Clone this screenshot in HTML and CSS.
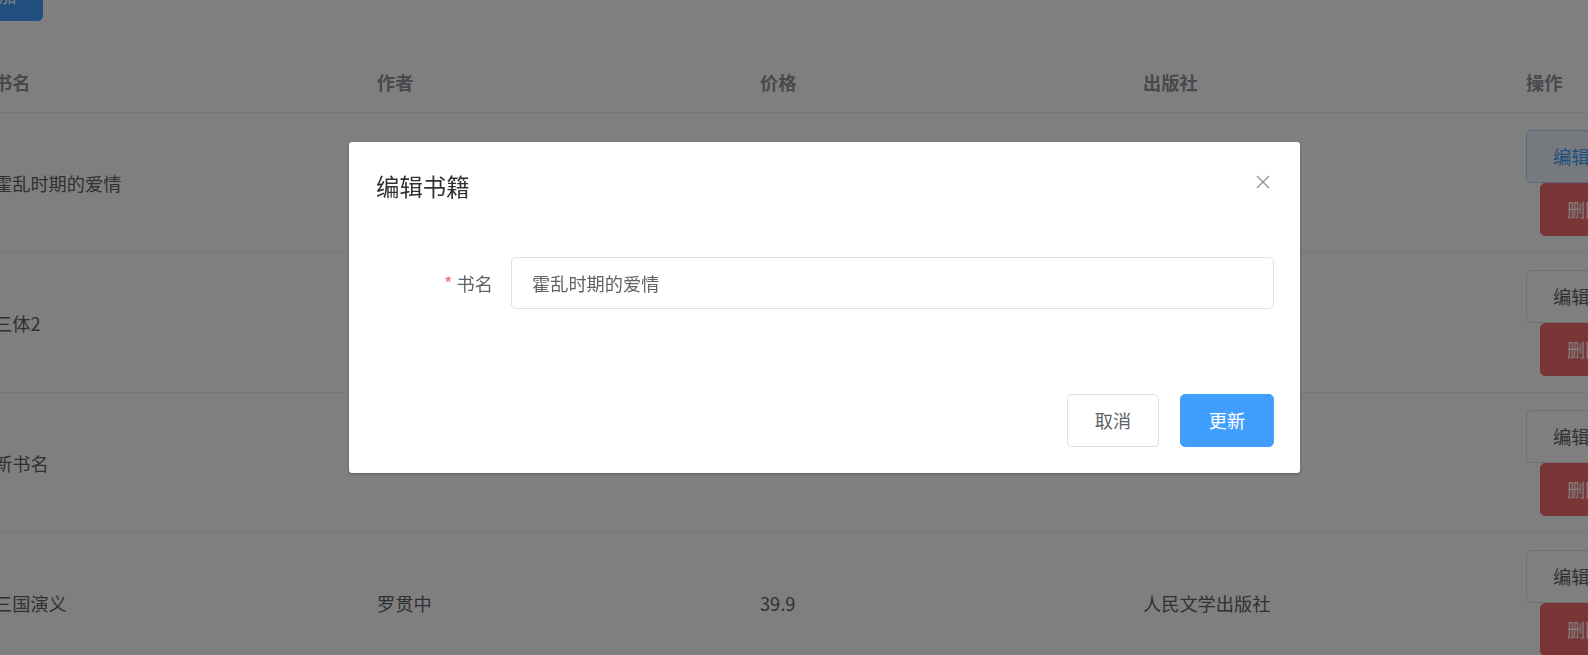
FILE: index.html
```html
<!DOCTYPE html>
<html lang="zh-CN">
<head>
<meta charset="utf-8">
<title>图书管理</title>
<link rel="stylesheet" href="styles.css">
</head>
<body>
<div class="page">
  <div class="toolbar">
    <button class="btn btn-primary">添加</button>
  </div>
  <div class="table">
    <div class="row head">
      <div class="cell">书名</div>
      <div class="cell">作者</div>
      <div class="cell">价格</div>
      <div class="cell">出版社</div>
      <div class="cell">操作</div>
    </div>
    <div class="row">
      <div class="cell">霍乱时期的爱情</div>
      <div class="cell">加西亚·马尔克斯</div>
      <div class="cell">39.5</div>
      <div class="cell">南海出版公司</div>
      <div class="cell actions">
        <button class="btn btn-plain-active">编辑</button>
        <button class="btn btn-danger">删除</button>
      </div>
    </div>
    <div class="row">
      <div class="cell">三体2</div>
      <div class="cell">刘慈欣</div>
      <div class="cell">32</div>
      <div class="cell">重庆出版社</div>
      <div class="cell actions">
        <button class="btn">编辑</button>
        <button class="btn btn-danger">删除</button>
      </div>
    </div>
    <div class="row">
      <div class="cell">新书名</div>
      <div class="cell">新作者</div>
      <div class="cell">20</div>
      <div class="cell">新出版社</div>
      <div class="cell actions">
        <button class="btn">编辑</button>
        <button class="btn btn-danger">删除</button>
      </div>
    </div>
    <div class="row">
      <div class="cell">三国演义</div>
      <div class="cell">罗贯中</div>
      <div class="cell">39.9</div>
      <div class="cell">人民文学出版社</div>
      <div class="cell actions">
        <button class="btn">编辑</button>
        <button class="btn btn-danger">删除</button>
      </div>
    </div>
  </div>
</div>

<div class="overlay"></div>

<div class="dialog-wrap">
  <div class="dialog">
    <div class="dialog-header">
      <span class="dialog-title">编辑书籍</span>
      <button class="dialog-close" aria-label="关闭">
        <svg width="14" height="14" viewBox="0 0 14 14"><path d="M1 1 L13 13 M13 1 L1 13" stroke="#909399" stroke-width="1.4" fill="none"/></svg>
      </button>
    </div>
    <div class="dialog-body">
      <div class="form-item">
        <label class="form-label"><span class="req">*</span>书名</label>
        <input class="input" type="text" value="霍乱时期的爱情">
      </div>
    </div>
    <div class="dialog-footer">
      <button class="btn btn-cancel">取消</button>
      <button class="btn btn-primary btn-update">更新</button>
    </div>
  </div>
</div>
</body>
</html>
```
FILE: styles.css
```css
html, body {
  margin: 0;
  padding: 0;
  height: 100%;
  overflow: hidden;
  background: #ffffff;
  font-family: "Noto Sans CJK SC", "Noto Sans", "Liberation Sans", sans-serif;
  color: #606266;
}

.page {
  margin: -31px 0 0 -47px;
}

.toolbar {
  display: flex;
  height: 52px;
}

.btn {
  box-sizing: border-box;
  height: 53px;
  padding: 0 26px;
  border: 1px solid #dcdfe6;
  border-radius: 5px;
  background: #ffffff;
  color: #606266;
  font-family: inherit;
  font-size: 18.2px;
  line-height: 1;
  white-space: nowrap;
  cursor: pointer;
}

.toolbar .btn {
  height: 52px;
}

.btn-primary {
  background: #409eff;
  border-color: #409eff;
  color: #ffffff;
}

.btn-danger {
  background: #f56c6c;
  border-color: #f56c6c;
  color: #ffffff;
}

.btn-plain-active {
  background: #ecf5ff;
  border-color: #b3d8ff;
  color: #409eff;
}

.table {
  margin: 30px 0 0 28px;
  width: 1915px;
}

.row {
  display: grid;
  grid-template-columns: repeat(5, 383px);
  height: 140px;
  box-sizing: border-box;
  border-bottom: 1px solid #ebeef5;
}

.row.head {
  height: 62px;
}

.cell {
  box-sizing: border-box;
  padding: 0 13px;
  display: flex;
  align-items: center;
  font-size: 18.2px;
  line-height: 30px;
  color: #606266;
}

.head .cell {
  color: #909399;
  font-weight: bold;
}

.actions {
  flex-direction: column;
  align-items: flex-start;
  justify-content: center;
}

.actions .btn-danger {
  margin-left: 14px;
}

.overlay {
  position: fixed;
  inset: 0;
  background: rgba(0, 0, 0, 0.5);
}

.dialog-wrap {
  position: fixed;
  left: 349px;
  top: 142px;
}

.dialog {
  width: 951px;
  background: #ffffff;
  border-radius: 3px;
  box-shadow: 0 1px 3px rgba(0, 0, 0, 0.3);
}

.dialog-header {
  position: relative;
  padding: 29px 26px 10px 27px;
  height: 31px;
}

.dialog-title {
  font-size: 23.4px;
  line-height: 31px;
  color: #303133;
}

.dialog-close {
  position: absolute;
  top: 33px;
  right: 30px;
  width: 14px;
  height: 14px;
  padding: 0;
  border: 0;
  background: transparent;
  display: flex;
}

.dialog-body {
  padding: 45px 26px 72px 26px;
}

.form-item {
  display: flex;
  align-items: center;
}

.form-label {
  width: 136px;
  box-sizing: border-box;
  padding-right: 18px;
  text-align: right;
  font-size: 18.2px;
  line-height: 52px;
  color: #606266;
}

.req {
  color: #f56c6c;
  margin-right: 4px;
}

.input {
  flex: 1;
  box-sizing: border-box;
  height: 52px;
  padding: 0 20px;
  border: 1px solid #dcdfe6;
  border-radius: 5px;
  font-family: inherit;
  font-size: 18.2px;
  color: #606266;
  outline: none;
}

.dialog-footer {
  display: flex;
  justify-content: flex-end;
  gap: 21px;
  padding: 13px 26px 26px;
}

.btn-cancel {
  width: 92px;
  padding: 0;
}

.btn-update {
  width: 94px;
  padding: 0;
}
```
